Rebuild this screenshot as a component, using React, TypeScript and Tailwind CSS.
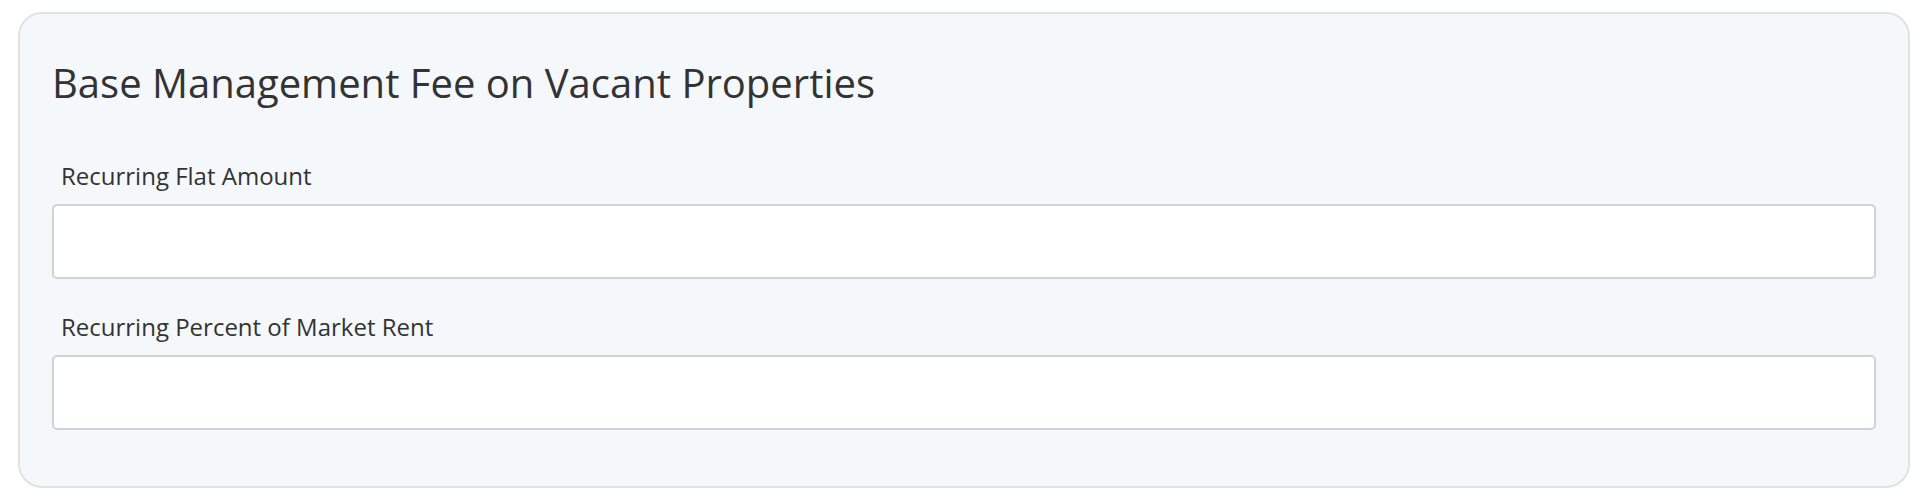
export default function App() {
  const font = { fontFamily: '"Open Sans", "Noto Sans", sans-serif' };
  return (
    <div className="bg-white pt-[12px] px-[18px] pb-[15px]" style={font}>
      <div className="border-2 border-[#e0e2e4] rounded-[24px] bg-[#f5f8fb] px-[32px] pt-[39px] pb-[56px]">
        <h2 className="text-[40px] text-[#333333]">Base Management Fee on Vacant Properties</h2>
        <div className="mt-[45px] flex flex-col">
          <label className="text-[24px] text-[#333333] pl-[9px]">Recurring Flat Amount</label>
          <input className="mt-[10px] h-[75px] bg-white border-2 border-[#cfd3d7] rounded-[5px] outline-none" />
          <label className="mt-[30px] text-[24px] text-[#333333] pl-[9px]">Recurring Percent of Market Rent</label>
          <input className="mt-[10px] h-[75px] bg-white border-2 border-[#cfd3d7] rounded-[5px] outline-none" />
        </div>
      </div>
    </div>
  );
}
